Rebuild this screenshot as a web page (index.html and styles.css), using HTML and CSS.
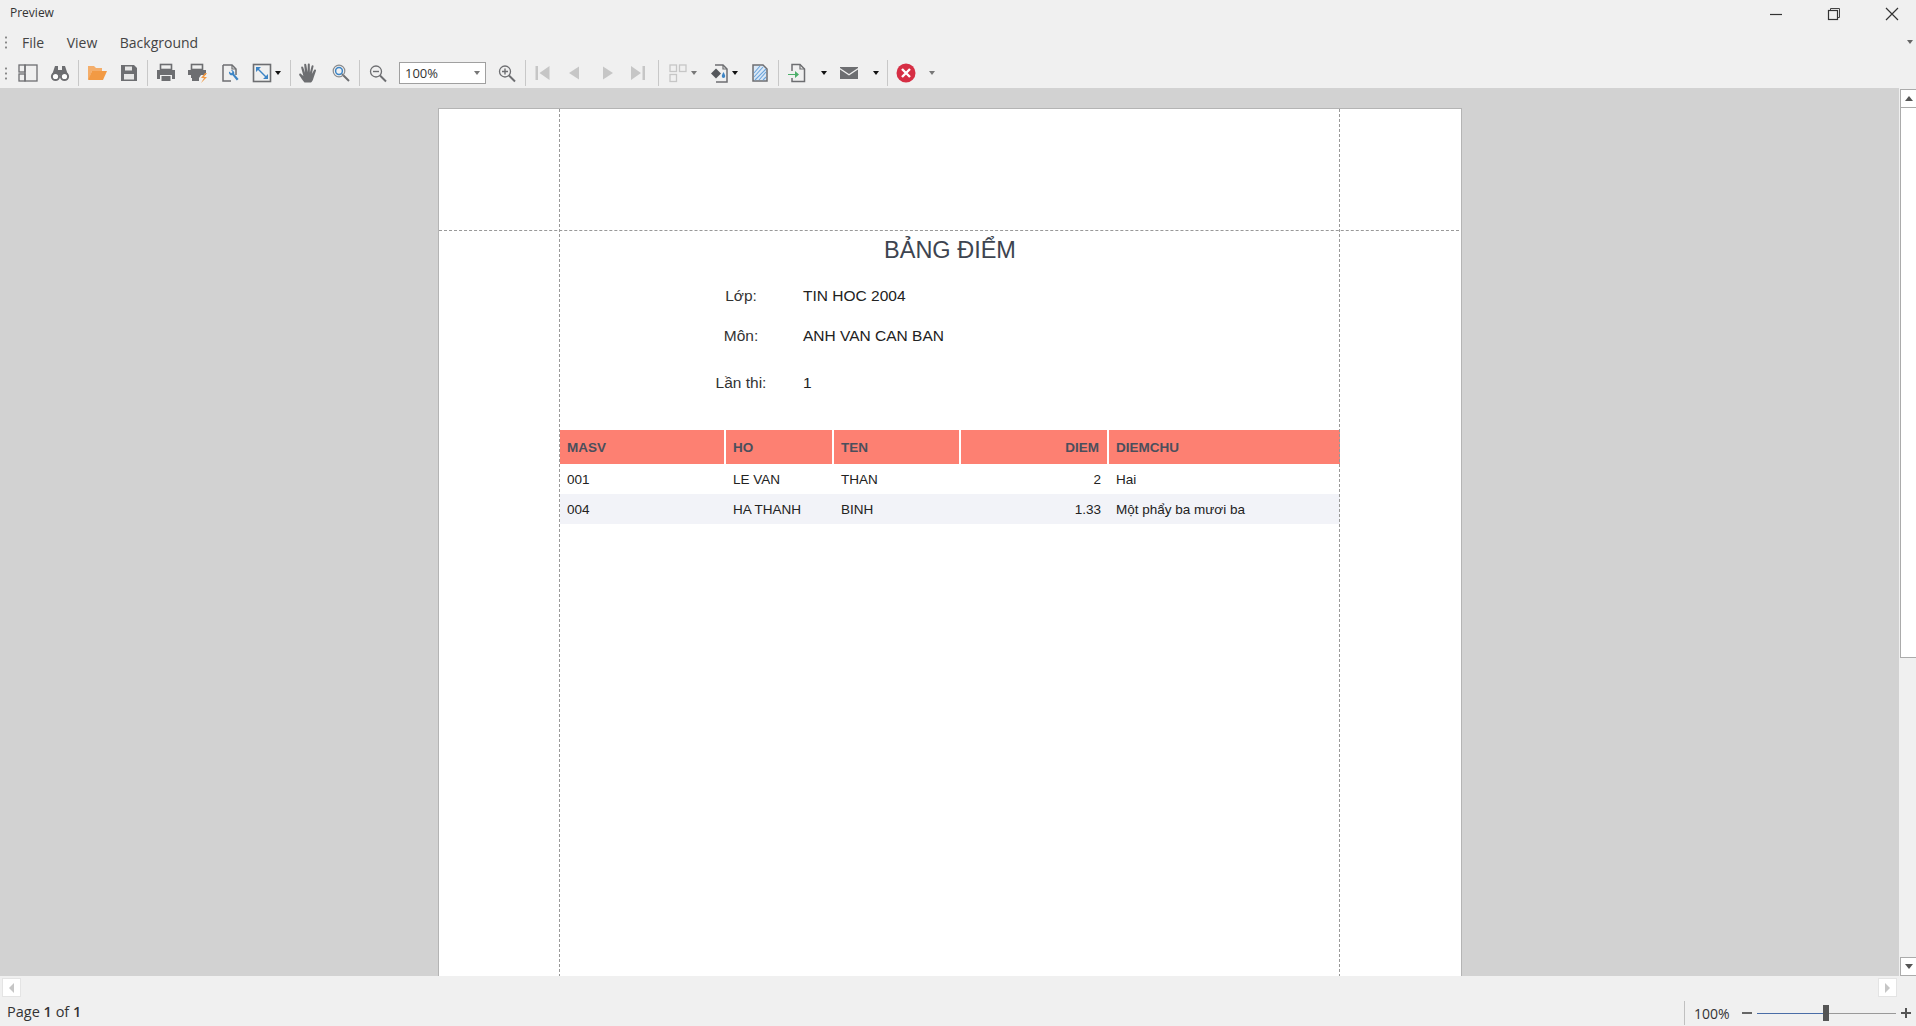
FILE: index.html
```html
<!DOCTYPE html>
<html lang="en">
<head>
    <meta charset="UTF-8">
    <title>Preview</title>
    <link rel="stylesheet" href="styles.css">
</head>
<body>
    <div class="window">
        <div class="titlebar">
            <span class="title">Preview</span>
            <div class="win-buttons">
                <svg class="win-btn" viewBox="0 0 14 14"><path d="M1 7.5h12" stroke="#333" stroke-width="1.2"/></svg>
                <svg class="win-btn" viewBox="0 0 14 14"><path d="M3.5 3.5V1.5H12.5V10.5H10.5" fill="none" stroke="#444" stroke-width="1"/><rect x="1.5" y="3.5" width="9" height="9" fill="#f0f0f0" stroke="#333" stroke-width="1.2"/></svg>
                <svg class="win-btn" viewBox="0 0 14 14"><path d="M1 1L13 13M13 1L1 13" stroke="#333" stroke-width="1.2"/></svg>
            </div>
        </div>

        <div class="menubar">
            <span class="grip"></span>
            <span class="menu-item">File</span>
            <span class="menu-item">View</span>
            <span class="menu-item">Background</span>
            <span class="overflow-arrow"></span>
        </div>

        <div class="toolbar">
            <span class="grip"></span>
            <!-- document map -->
            <span class="tb"><svg viewBox="0 0 20 20"><g fill="none" stroke="#6d6e71" stroke-width="1.3"><rect x="1" y="2" width="6" height="7"/><rect x="1" y="11" width="6" height="7"/><rect x="7" y="2" width="12" height="16"/></g></svg></span>
            <!-- find -->
            <span class="tb"><svg viewBox="0 0 20 20"><path d="M5 3h3v4h4V3h3l3 9H2z" fill="#6d6e71"/><circle cx="5.5" cy="13.5" r="3.6" fill="#fff" stroke="#6d6e71" stroke-width="2"/><circle cx="14.5" cy="13.5" r="3.6" fill="#fff" stroke="#6d6e71" stroke-width="2"/></svg></span>
            <span class="sep"></span>
            <!-- open -->
            <span class="tb"><svg viewBox="0 0 20 20"><path d="M1 3h6l2 2h6v3H5L2 16H1z" fill="#f4ae6b"/><path d="M5 8h15l-4 9H1z" fill="#f29a44"/></svg></span>
            <!-- save -->
            <span class="tb"><svg viewBox="0 0 20 20"><path d="M2 2h13l3 3v13H2z" fill="#6d6e71"/><rect x="6" y="3.5" width="7" height="4" fill="#e6e6e6"/><rect x="5" y="11" width="10" height="5.5" fill="#e6e6e6"/></svg></span>
            <span class="sep"></span>
            <!-- print -->
            <span class="tb"><svg viewBox="0 0 20 20"><rect x="4.5" y="1.5" width="11" height="5" fill="none" stroke="#6d6e71" stroke-width="1.6"/><path d="M1 7h18v9h-3v-4H4v4H1z" fill="#6d6e71"/><rect x="5.500" y="13" width="9" height="5" fill="#6d6e71"/></svg></span>
            <!-- quick print -->
            <span class="tb"><svg viewBox="0 0 20 20"><rect x="3.5" y="1.5" width="11" height="5" fill="none" stroke="#6d6e71" stroke-width="1.6"/><path d="M0 7h18v5h-5l-2 3H3v-3H0z" fill="#6d6e71"/><rect x="4" y="13" width="7" height="5" fill="#6d6e71"/><path d="M17 10l-4 5h3l-3 5 6-6h-3l3-4z" fill="#f29a44"/></svg></span>
            <!-- page setup -->
            <span class="tb"><svg viewBox="0 0 20 20"><path d="M3 2h9l4 4v6M3 2v16h8" fill="none" stroke="#6d6e71" stroke-width="1.5"/><path d="M12 2v4h4" fill="none" stroke="#6d6e71" stroke-width="1.2"/><path d="M9 8.5a3 3 0 0 0 3.6 3.7l4.2 5.3 1.8-1.6-4.4-5a3 3 0 0 0-3.2-3.8l1.6 2-1.3 1.2z" fill="#3d85c6"/></svg></span>
            <!-- scale -->
            <span class="tb-split tb-split-wide"><svg viewBox="0 0 20 20"><rect x="1.5" y="1.5" width="17" height="17" fill="none" stroke="#6d6e71" stroke-width="1.6"/><path d="M5 5l10 10" stroke="#3d85c6" stroke-width="1.4"/><path d="M4 4h5L4 9zM16 16h-5l5-5z" fill="#3d85c6"/></svg><span class="drop"></span></span>
            <span class="sep"></span>
            <!-- hand -->
            <span class="tb"><svg viewBox="0 0 20 20"><path d="M5.500 19.500C3.500 17.500 2 14.500 .3 12.300c-.7-1 .7-2.300 1.800-1.400L4.400 13 2.200 4.800c-.3-1.300 1.500-1.800 2-.5l1.800 5.500-.8-7.900c-.1-1.400 1.900-1.500 2.100-.2l1.200 7.500.3-7.800c0-1.300 2-1.300 2 0l.1 8 1.700-6.400c.3-1.200 2.200-.9 1.900.5l-1.700 7.600 2.300-4.100c.700-1.100 2.400-.3 1.800.9L14.500 15c-.6 2-1.300 3.500-2.500 4.500z" fill="#6d6e71"/></svg></span>
            <!-- zoom tool -->
            <span class="tb"><svg viewBox="0 0 20 20"><path d="M11 11l7 7" stroke="#6d6e71" stroke-width="2"/><circle cx="8" cy="8" r="5.8" fill="none" stroke="#8a8b8d" stroke-width="1.2"/><circle cx="8" cy="8" r="3.4" fill="none" stroke="#3d85c6" stroke-width="1.5"/></svg></span>
            <span class="sep"></span>
            <!-- zoom out -->
            <span class="tb"><svg viewBox="0 0 20 20"><path d="M12 12.500l6 6" stroke="#6d6e71" stroke-width="2"/><circle cx="8" cy="8.500" r="5.500" fill="none" stroke="#6d6e71" stroke-width="1.300"/><path d="M5 8.500h6" stroke="#6d6e71" stroke-width="1.400"/></svg></span>
            <div class="zoom-combo">
                <span>100%</span>
                <span class="drop drop-grey"></span>
            </div>
            <!-- zoom in -->
            <span class="tb"><svg viewBox="0 0 20 20"><path d="M12 12.500l6 6" stroke="#6d6e71" stroke-width="2"/><circle cx="8" cy="8.500" r="5.500" fill="none" stroke="#6d6e71" stroke-width="1.300"/><path d="M5 8.500h6M8 5.500v6" stroke="#6d6e71" stroke-width="1.400"/></svg></span>
            <span class="sep"></span>
            <!-- page navigation (disabled) -->
            <span class="tb"><svg viewBox="0 0 20 20"><path d="M1.500 3H4v14H1.500zM15.500 3v14L5.500 10z" fill="#c6c6c6"/></svg></span>
            <span class="tb"><svg viewBox="0 0 20 20"><path d="M13 3.500v13L3 10z" fill="#c6c6c6"/></svg></span>
            <span class="tb"><svg viewBox="0 0 20 20"><path d="M5 3.500v13L15 10z" fill="#c6c6c6"/></svg></span>
            <span class="tb"><svg viewBox="0 0 20 20"><path d="M15 3h-2.500v14H15zM1 3v14l10-7z" fill="#c6c6c6"/></svg></span>
            <span class="sep"></span>
            <!-- multiple pages -->
            <span class="tb-split tb-split-shift"><svg viewBox="0 0 20 20"><g fill="none" stroke="#c6c6c6" stroke-width="1.300"><rect x="2" y="2" width="6.500" height="6.500"/><rect x="11.500" y="2" width="6.500" height="6.500"/><rect x="2" y="11.500" width="6.500" height="7"/></g></svg><span class="drop drop-grey"></span></span>
            <!-- page colour -->
            <span class="tb-split"><svg viewBox="0 0 20 20"><path d="M6 2h8l4 4v13H7" fill="none" stroke="#6d6e71" stroke-width="1.500"/><path d="M14 2v4h4" fill="none" stroke="#6d6e71" stroke-width="1.200"/><path d="M7 5.500l5 5-5 5-5-5z" fill="#55585c"/><path d="M14.500 9c1 2 1.700 3 1.700 4.200a1.700 1.700 0 0 1-3.400 0c0-1.200.7-2.200 1.700-4.200z" fill="#3d85c6"/></svg><span class="drop"></span></span>
            <!-- watermark -->
            <span class="tb"><svg viewBox="0 0 20 20"><path d="M3 2h10l4 4v12H3z" fill="#dbe8f6" stroke="#6d6e71" stroke-width="1.500"/><path d="M4 10l6-7M4 14l9-10M5 17L16 6M9 17l7-8M13 17l3-3" stroke="#6ba5dc" stroke-width="1.100"/></svg></span>
            <span class="sep"></span>
            <!-- export -->
            <span class="tb"><svg viewBox="0 0 20 20"><path d="M5 8V1.500h8l4.500 4.500v12.500H5V15" fill="none" stroke="#6d6e71" stroke-width="1.500"/><path d="M13 1.500v4.500h4.500" fill="none" stroke="#6d6e71" stroke-width="1.200"/><path d="M1 11h7V8l4 3.500-4 3.500v-3H1z" fill="#4caf6a"/></svg></span>
            <span class="drop drop-spaced"></span>
            <!-- send mail -->
            <span class="tb"><svg viewBox="0 0 20 20"><path d="M1 4h18v1L10 11 1 5z" fill="#6d6e71"/><path d="M1 6.500l9 6 9-6V16H1z" fill="#6d6e71"/></svg></span>
            <span class="drop drop-spaced"></span>
            <span class="sep"></span>
            <!-- close -->
            <span class="tb"><svg viewBox="0 0 20 20"><circle cx="10" cy="10" r="9.500" fill="#d62e44"/><path d="M6 6l8 8M14 6l-8 8" stroke="#fff" stroke-width="2.400"/></svg></span>
            <span class="drop drop-grey drop-close"></span>
        </div>

        <div class="viewer">
            <div class="viewport">
                <div class="page">
                    <div class="guide guide-top"></div>
                    <div class="guide guide-left"></div>
                    <div class="guide guide-right"></div>

                    <div class="report">
                        <h1 class="report-title">BẢNG ĐIỂM</h1>
                        <div class="field field-class"><span class="field-label">Lớp:</span><span>TIN HOC 2004</span></div>
                        <div class="field field-subject"><span class="field-label">Môn:</span><span>ANH VAN CAN BAN</span></div>
                        <div class="field field-attempt"><span class="field-label">Lần thi:</span><span>1</span></div>

                        <div class="grades">
                            <div class="row row-head">
                                <span class="cell cell-masv">MASV</span>
                                <span class="cell cell-ho">HO</span>
                                <span class="cell cell-ten">TEN</span>
                                <span class="cell cell-diem">DIEM</span>
                                <span class="cell cell-chu">DIEMCHU</span>
                            </div>
                            <div class="row">
                                <span class="cell cell-masv">001</span>
                                <span class="cell cell-ho">LE VAN</span>
                                <span class="cell cell-ten">THAN</span>
                                <span class="cell cell-diem">2</span>
                                <span class="cell cell-chu">Hai</span>
                            </div>
                            <div class="row row-alt">
                                <span class="cell cell-masv">004</span>
                                <span class="cell cell-ho">HA THANH</span>
                                <span class="cell cell-ten">BINH</span>
                                <span class="cell cell-diem">1.33</span>
                                <span class="cell cell-chu">Một phẩy ba mươi ba</span>
                            </div>
                        </div>
                    </div>
                </div>
            </div>

            <div class="vscroll">
                <div class="scroll-btn scroll-btn-v"><span class="arr arr-up"></span></div>
                <div class="vscroll-thumb"></div>
                <div class="vscroll-track"></div>
                <div class="scroll-btn scroll-btn-v"><span class="arr arr-down"></span></div>
            </div>
        </div>

        <div class="hscroll">
            <div class="scroll-btn scroll-btn-h"><span class="arr arr-left"></span></div>
            <div class="scroll-btn scroll-btn-h"><span class="arr arr-right"></span></div>
        </div>

        <div class="statusbar">
            <span class="page-count">Page <b>1</b> of <b>1</b></span>
            <div class="status-zoom">
                <span class="status-percent">100%</span>
                <span class="zoom-minus"></span>
                <div class="slider">
                    <div class="slider-fill"></div>
                    <div class="slider-thumb"></div>
                    <div class="slider-rest"></div>
                </div>
                <span class="zoom-plus"></span>
            </div>
        </div>
    </div>
</body>
</html>
```

FILE: styles.css
```css
html, body {
    margin: 0;
    padding: 0;
    height: 100%;
    overflow: hidden;
}

body {
    font-family: "Open Sans", "Noto Sans", sans-serif;
    background-color: #f0f0f0;
    color: #333;
}

.window {
    display: flex;
    flex-direction: column;
    height: 100vh;
}

/* Title bar */
.titlebar {
    height: 28px;
    flex: none;
    display: flex;
    align-items: center;
    justify-content: space-between;
    padding-left: 10px;
}

.title {
    font-size: 12px;
    line-height: 26px;
    height: 28px;
    color: #333;
}

.win-buttons {
    display: flex;
    gap: 44px;
    padding-right: 17px;
}

.win-btn {
    width: 14px;
    height: 14px;
}

/* Menu bar */
.menubar {
    height: 28px;
    flex: none;
    display: flex;
    align-items: center;
    padding-left: 5px;
    font-size: 14px;
    color: #444;
}

.grip {
    width: 2px;
    height: 14px;
    flex: none;
    margin-right: 5px;
    background-image: radial-gradient(circle, #888 1px, transparent 1.2px);
    background-size: 2px 5px;
}

.menu-item {
    margin-left: 10px;
    margin-right: 12.5px;
}

.overflow-arrow {
    margin-left: auto;
    margin-right: 3px;
    border-left: 3.5px solid transparent;
    border-right: 3.5px solid transparent;
    border-top: 4px solid #666;
}

/* Toolbar */
.toolbar {
    height: 32px;
    flex: none;
    box-sizing: border-box;
    display: flex;
    align-items: center;
    padding: 2px 0 0 5px;
}

.toolbar .grip {
    margin-right: 5px;
}

.tb {
    width: 32px;
    height: 22px;
    flex: none;
    display: flex;
    align-items: center;
    justify-content: center;
}

.tb svg, .tb-split svg {
    width: 20px;
    height: 20px;
}

.tb-split {
    flex: none;
    display: flex;
    align-items: center;
    gap: 3px;
    padding: 0 6px;
}

.tb-split-wide {
    padding-right: 7px;
}

.tb-split-shift {
    margin-left: 1px;
}

.sep {
    width: 1px;
    height: 26px;
    flex: none;
    margin: 0 2px;
    background-color: #c8c8c8;
}

.drop {
    width: 0;
    height: 0;
    flex: none;
    border-left: 3.5px solid transparent;
    border-right: 3.5px solid transparent;
    border-top: 4px solid #111;
}

.drop-grey {
    border-top-color: #777;
}

.drop-spaced {
    margin: 0 6px 0 8px;
}

.drop-close {
    margin-left: 7px;
}

.zoom-combo {
    width: 87px;
    height: 22px;
    flex: none;
    box-sizing: border-box;
    margin: 0 5px;
    padding: 0 5px;
    display: flex;
    align-items: center;
    justify-content: space-between;
    background-color: #fff;
    border: 1px solid #a0a0a0;
    font-size: 13px;
    color: #333;
}

/* Document area */
.viewer {
    flex: 1;
    min-height: 0;
    display: flex;
}

.viewport {
    flex: 1;
    min-width: 0;
    overflow: hidden;
    background-color: #d2d2d2;
    padding: 20px 0 0 438px;
    margin-right: 1px;
}

.page {
    position: relative;
    width: 1024px;
    height: 1400px;
    box-sizing: border-box;
    background-color: #fff;
    border: 1px solid #b4b4b4;
    font-family: "Liberation Sans", Arial, sans-serif;
}

/* Dashed margin guides lie over the page */
.guide {
    position: absolute;
}

.guide-top {
    top: 121px;
    left: 0;
    right: 2px;
    border-top: 1px dashed #999;
}

.guide-left {
    top: 0;
    bottom: 0;
    left: 120px;
    border-left: 1px dashed #999;
}

.guide-right {
    top: 0;
    bottom: 0;
    left: 900px;
    border-left: 1px dashed #999;
}

.report {
    margin-left: 121px;
    width: 780px;
    padding-top: 126px;
}

.report-title {
    margin: 0;
    font-size: 23.5px;
    font-weight: normal;
    line-height: 30px;
    text-align: center;
    color: #3d4450;
}

.field {
    display: flex;
    font-size: 15.5px;
    line-height: 20px;
    color: #222;
}

.field-label {
    width: 243px;
    padding-left: 119px;
    box-sizing: border-box;
    flex: none;
    text-align: center;
    color: #333;
}

.field-class {
    margin-top: 21px;
}

.field-subject {
    margin-top: 20px;
}

.field-attempt {
    margin-top: 27px;
}

/* Grades table */
.grades {
    margin-top: 37px;
    font-size: 13.5px;
    color: #222;
}

.row {
    display: flex;
    height: 30px;
    align-items: center;
}

.row-head {
    height: 34px;
    gap: 2px;
    font-weight: bold;
    color: #4a4f5c;
}

.row-head .cell {
    height: 100%;
    display: flex;
    align-items: center;
    background-color: #fd8072;
}

.row-head .cell-diem {
    justify-content: flex-end;
}

.row-alt {
    background-color: #f2f3f8;
}

.cell {
    box-sizing: border-box;
    padding: 0 7px;
    white-space: nowrap;
    flex: none;
}

.cell-masv { width: 164px; }
.cell-ho { width: 106px; }
.cell-ten { width: 125px; }
.cell-diem { width: 146px; padding-right: 8px; text-align: right; }
.cell-chu { width: 231px; }

.row:not(.row-head) .cell-masv { width: 166px; }
.row:not(.row-head) .cell-ho { width: 108px; }
.row:not(.row-head) .cell-ten { width: 127px; }
.row:not(.row-head) .cell-diem { width: 148px; }

/* Scroll bars */
.vscroll {
    width: 16px;
    flex: none;
    display: flex;
    flex-direction: column;
    padding-top: 1px;
}

.scroll-btn {
    flex: none;
    box-sizing: border-box;
    display: flex;
    align-items: center;
    justify-content: center;
    background-color: #fff;
}

.scroll-btn-v {
    height: 19px;
    border: 1px solid #ababab;
    border-right: none;
}

.vscroll-thumb {
    height: 550px;
    flex: none;
    box-sizing: border-box;
    background-color: #fff;
    border-left: 1px solid #ababab;
    border-bottom: 1px solid #ababab;
}

.vscroll-track {
    flex: 1;
}

.arr {
    width: 0;
    height: 0;
}

.arr-up {
    border-left: 4px solid transparent;
    border-right: 4px solid transparent;
    border-bottom: 5px solid #555;
}

.arr-down {
    border-left: 4px solid transparent;
    border-right: 4px solid transparent;
    border-top: 5px solid #555;
}

.arr-left {
    border-top: 5px solid transparent;
    border-bottom: 5px solid transparent;
    border-right: 5px solid #c6c6c6;
}

.arr-right {
    border-top: 5px solid transparent;
    border-bottom: 5px solid transparent;
    border-left: 5px solid #c6c6c6;
}

.hscroll {
    height: 24px;
    flex: none;
    box-sizing: border-box;
    padding: 2px 19px 3px 2px;
    display: flex;
    justify-content: space-between;
}

.scroll-btn-h {
    width: 19px;
    border: 1px solid #e4e4e4;
}

/* Status bar */
.statusbar {
    height: 26px;
    flex: none;
    display: flex;
    align-items: center;
    justify-content: space-between;
    padding-left: 7px;
    font-size: 14px;
    color: #333;
}

.page-count {
    font-size: 14.5px;
    line-height: 24px;
    height: 26px;
}

.page-count b {
    font-weight: 600;
}

.status-zoom {
    height: 24px;
    display: flex;
    align-items: center;
    border-left: 1px solid #c0c0c0;
    padding: 0 5px 0 9px;
    box-sizing: border-box;
}

.status-percent {
    width: 48px;
    flex: none;
}

.zoom-minus {
    width: 10px;
    height: 2px;
    flex: none;
    background-color: #666;
}

.zoom-plus {
    width: 10px;
    height: 10px;
    flex: none;
    background:
        linear-gradient(#555, #555) center / 10px 2px no-repeat,
        linear-gradient(#555, #555) center / 2px 10px no-repeat;
}

.slider {
    width: 139px;
    margin: 0 5px;
    flex: none;
    display: flex;
    align-items: center;
}

.slider-fill {
    width: 66px;
    height: 1px;
    background-color: #4a6da7;
}

.slider-thumb {
    width: 6px;
    height: 16px;
    flex: none;
    background-color: #555;
}

.slider-rest {
    flex: 1;
    height: 1px;
    background-color: #999;
}
```
